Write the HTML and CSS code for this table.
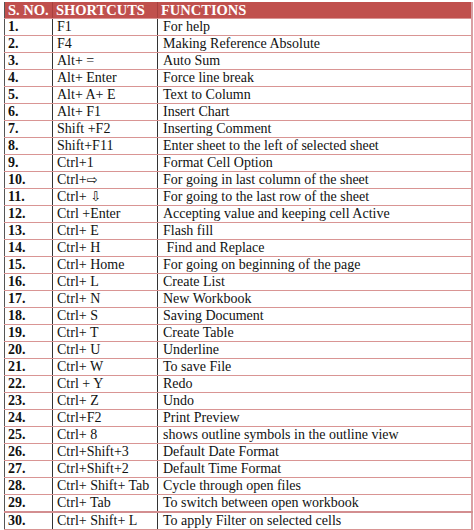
FILE: index.html
```html
<!DOCTYPE html>
<html>
<head>
<meta charset="utf-8">
<link rel="stylesheet" href="styles.css">
</head>
<body>
<table class="sheet">
<colgroup><col class="c1"><col class="c2"><col class="c3"></colgroup>
<thead>
<tr><th>S. NO.</th><th>SHORTCUTS</th><th>FUNCTIONS</th></tr>
</thead>
<tbody>
<tr><td>1.</td><td>F1</td><td>For help</td></tr>
<tr><td>2.</td><td>F4</td><td>Making Reference Absolute</td></tr>
<tr><td>3.</td><td>Alt+ =</td><td>Auto Sum</td></tr>
<tr><td>4.</td><td>Alt+ Enter</td><td>Force line break</td></tr>
<tr><td>5.</td><td>Alt+ A+ E</td><td>Text to Column</td></tr>
<tr><td>6.</td><td>Alt+ F1</td><td>Insert Chart</td></tr>
<tr><td>7.</td><td>Shift +F2</td><td>Inserting Comment</td></tr>
<tr><td>8.</td><td>Shift+F11</td><td>Enter sheet to the left of selected sheet</td></tr>
<tr><td>9.</td><td>Ctrl+1</td><td>Format Cell Option</td></tr>
<tr><td>10.</td><td>Ctrl+<span class="arr">⇨</span></td><td>For going in last column of the sheet</td></tr>
<tr><td>11.</td><td>Ctrl+ <span class="arr">⇩</span></td><td>For going to the last row of the sheet</td></tr>
<tr><td>12.</td><td>Ctrl +Enter</td><td>Accepting value and keeping cell Active</td></tr>
<tr><td>13.</td><td>Ctrl+ E</td><td>Flash fill</td></tr>
<tr><td>14.</td><td>Ctrl+ H</td><td>&nbsp;Find and Replace</td></tr>
<tr><td>15.</td><td>Ctrl+ Home</td><td>For going on beginning of the page</td></tr>
<tr><td>16.</td><td>Ctrl+ L</td><td>Create List</td></tr>
<tr><td>17.</td><td>Ctrl+ N</td><td>New Workbook</td></tr>
<tr><td>18.</td><td>Ctrl+ S</td><td>Saving Document</td></tr>
<tr><td>19.</td><td>Ctrl+ T</td><td>Create Table</td></tr>
<tr><td>20.</td><td>Ctrl+ U</td><td>Underline</td></tr>
<tr><td>21.</td><td>Ctrl+ W</td><td>To save File</td></tr>
<tr><td>22.</td><td>Ctrl + Y</td><td>Redo</td></tr>
<tr><td>23.</td><td>Ctrl+ Z</td><td>Undo</td></tr>
<tr><td>24.</td><td>Ctrl+F2</td><td>Print Preview</td></tr>
<tr><td>25.</td><td>Ctrl+ 8</td><td>shows outline symbols in the outline view</td></tr>
<tr><td>26.</td><td>Ctrl+Shift+3</td><td>Default Date Format</td></tr>
<tr><td>27.</td><td>Ctrl+Shift+2</td><td>Default Time Format</td></tr>
<tr><td>28.</td><td>Ctrl+ Shift+ Tab</td><td>Cycle through open files</td></tr>
<tr class="pre-last"><td>29.</td><td>Ctrl+ Tab</td><td>To switch between open workbook</td></tr>
<tr><td>30.</td><td>Ctrl+ Shift+ L</td><td>To apply Filter on selected cells</td></tr>
</tbody>
</table>
</body>
</html>
```
FILE: styles.css
```css
html, body {
  margin: 0;
  padding: 0;
  background: #ffffff;
}
body {
  padding: 2px 0 0 4px;
}
.sheet {
  border-collapse: collapse;
  table-layout: fixed;
  width: 467px;
  font-family: "Liberation Serif", "Times New Roman", serif;
  font-size: 14px;
  color: #111;
  border-right: 2px solid #d9a0a4;
  border-left: 1px solid #555;
}
.c1 { width: 48px; }
.c2 { width: 105px; }
.c3 { width: 314px; }
.sheet th {
  background: #c0504d;
  color: #fff;
  font-weight: bold;
  font-size: 14.5px;
  text-align: left;
  height: 16px;
  padding: 0 0 0 3px;
  line-height: 16px;
  border-right: 1px solid #a8403e;
  border-bottom: 1px solid #d99594;
}
.sheet td {
  height: 16px;
  padding: 0 0 0 4px;
  line-height: 16px;
  white-space: nowrap;
  border-bottom: 1px solid #d99594;
  border-right: 1px solid #333;
}
.sheet td:first-child {
  font-weight: bold;
  padding-left: 3px;
}
.sheet td:last-child {
  padding-left: 5px;
  border-right: none;
}
.pre-last td {
  border-bottom: 2px solid #d38e90;
}
.arr {
  font-family: "DejaVu Sans", sans-serif;
  font-size: 13px;
  line-height: 14px;
}
```
